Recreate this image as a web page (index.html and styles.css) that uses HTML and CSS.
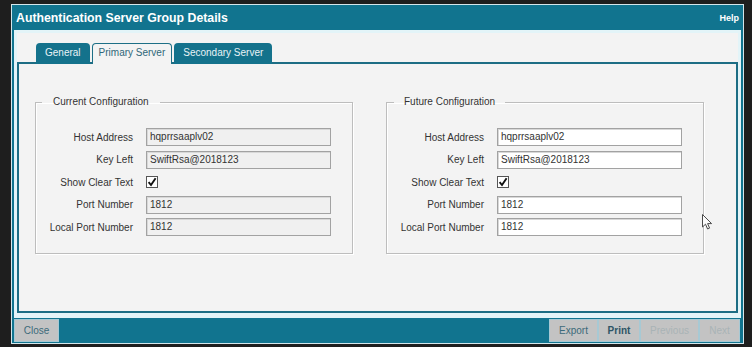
FILE: index.html
```html
<!DOCTYPE html>
<html>
<head>
<meta charset="utf-8">
<title>Authentication Server Group Details</title>
<link rel="stylesheet" href="styles.css">
</head>
<body>
<div class="dialog">
  <div class="titlebar">
    <span class="title">Authentication Server Group Details</span>
    <span class="help">Help</span>
  </div>
  <div class="body">
    <div class="tabs">
      <div class="tab">General</div>
      <div class="tab active">Primary Server</div>
      <div class="tab">Secondary Server</div>
    </div>
    <div class="panel">
      <fieldset class="group current">
        <legend>Current Configuration</legend>
        <div class="grid">
          <span class="lbl">Host Address</span><div class="field">hqprrsaaplv02</div>
          <span class="lbl">Key Left</span><div class="field">SwiftRsa@2018123</div>
          <span class="lbl">Show Clear Text</span><span class="check"><svg viewBox="0 0 10 10" width="10" height="10"><path d="M1.6 5.2 L4 8 L8.6 1.2" fill="none" stroke="#111" stroke-width="1.9"/></svg></span>
          <span class="lbl">Port Number</span><div class="field">1812</div>
          <span class="lbl">Local Port Number</span><div class="field">1812</div>
        </div>
      </fieldset>
      <fieldset class="group future">
        <legend>Future Configuration</legend>
        <div class="grid">
          <span class="lbl">Host Address</span><div class="field">hqprrsaaplv02</div>
          <span class="lbl">Key Left</span><div class="field">SwiftRsa@2018123</div>
          <span class="lbl">Show Clear Text</span><span class="check"><svg viewBox="0 0 10 10" width="10" height="10"><path d="M1.6 5.2 L4 8 L8.6 1.2" fill="none" stroke="#111" stroke-width="1.9"/></svg></span>
          <span class="lbl">Port Number</span><div class="field">1812</div>
          <span class="lbl">Local Port Number</span><div class="field">1812</div>
        </div>
      </fieldset>
    </div>
  </div>
  <div class="footer">
    <button class="btn btn-close">Close</button>
    <div class="spacer"></div>
    <button class="btn btn-export">Export</button>
    <button class="btn btn-print">Print</button>
    <button class="btn btn-prev" disabled>Previous</button>
    <button class="btn btn-next" disabled>Next</button>
  </div>
</div>
<svg class="cursor" width="11" height="17" viewBox="0 0 11 17"><path d="M0.5 0.5 L0.5 13 L3.5 10.2 L5.6 15 L7.6 14.1 L5.6 9.6 L9.6 9.6 Z" fill="#fafafa" stroke="#4a4a4a" stroke-width="1"/></svg>
</body>
</html>
```

FILE: styles.css
```css
* { box-sizing: border-box; }
html, body { margin: 0; }
body {
  background: #1e1e1e;
  width: 752px;
  height: 347px;
  overflow: hidden;
  position: relative;
  font-family: "Liberation Sans", Arial, sans-serif;
  font-size: 10px;
  color: #333;
}
.dialog {
  margin: 4px 0 0 11px;
  width: 733px;
  height: 340px;
  border: 1px solid #d4e6eb;
  background: #11748f;
  display: flex;
  flex-direction: column;
}
.titlebar {
  height: 25px;
  flex: none;
  display: flex;
  align-items: center;
  justify-content: space-between;
  padding: 0 4px;
  color: #fff;
}
.title { font-size: 12.3px; font-weight: bold; }
.help { font-size: 9px; font-weight: bold; }
.body {
  flex: none;
  height: 288px;
  margin: 0 2px;
  background: #f3f3f3;
  border: 3px solid #e3f4f8;
  border-bottom-width: 5px;
  display: flex;
  flex-direction: column;
}
.tabs {
  display: flex;
  gap: 2px;
  margin: 10px 0 -2px 19px;
  height: 21px;
  position: relative;
  z-index: 1;
}
.tab {
  background: #14728c;
  color: #e9f3f6;
  padding: 0 9px 2px;
  line-height: 19px;
  border-radius: 4px 4px 0 0;
  white-space: nowrap;
}
.tab.active {
  background: #f3f3f3;
  color: #2f6779;
  border: 1px solid #1d6f86;
  border-bottom: none;
  padding: 0 6px 2px;
  line-height: 18px;
}
.panel {
  flex: 1;
  border: 2px solid #1c6d84;
  display: flex;
  align-items: flex-start;
  gap: 33px;
  padding: 32px 0 0 16px;
}
.group {
  margin: 0;
  width: 318px;
  border: 1px solid #bdbdbd;
  box-shadow: 1px 1px 0 #fff, inset 1px 1px 0 #fff;
  padding: 20px 0 17px 13px;
}
.group legend {
  margin-left: -7px;
  padding: 0 11px;
  line-height: 12px;
  color: #333;
  white-space: nowrap;
}
.future legend { margin-left: -6px; padding: 0 10px; }
.grid {
  display: grid;
  grid-template-columns: 84px 185px;
  column-gap: 13px;
  row-gap: 4.6px;
  grid-auto-rows: 18px;
  align-items: center;
}
.lbl { text-align: right; color: #333; white-space: nowrap; }
.field {
  height: 18px;
  border: 1px solid #a2a2a2;
  box-shadow: inset 1px 1px 0 #d8d8d8;
  background: #f0f0f0;
  padding: 0 3px;
  line-height: 16px;
  color: #333;
  white-space: nowrap;
}
.future .field { background: #fff; }
.check {
  justify-self: start;
  width: 12px;
  height: 12px;
  border: 1px solid #555;
  background: #fff;
  display: flex;
  align-items: center;
  justify-content: center;
}
.footer {
  height: 25px;
  flex: none;
  display: flex;
  padding: 1px 3px 1px 2px;
}
.spacer { flex: 1; }
.btn {
  height: 23px;
  border: 1px solid #a7c9d4;
  background: #c3c3c3;
  font-family: "Liberation Sans", Arial, sans-serif;
  font-size: 10px;
  color: #3c6a7a;
  padding: 0;
  margin: 0;
}
.btn-close { width: 45px; }
.btn-export { width: 49px; }
.btn-print { width: 42px; font-weight: bold; color: #2e5566; }
.btn-prev { width: 59px; color: #a9b3b6; }
.btn-next { width: 41px; color: #a9b3b6; }
.cursor { position: absolute; left: 702px; top: 214px; }
```
